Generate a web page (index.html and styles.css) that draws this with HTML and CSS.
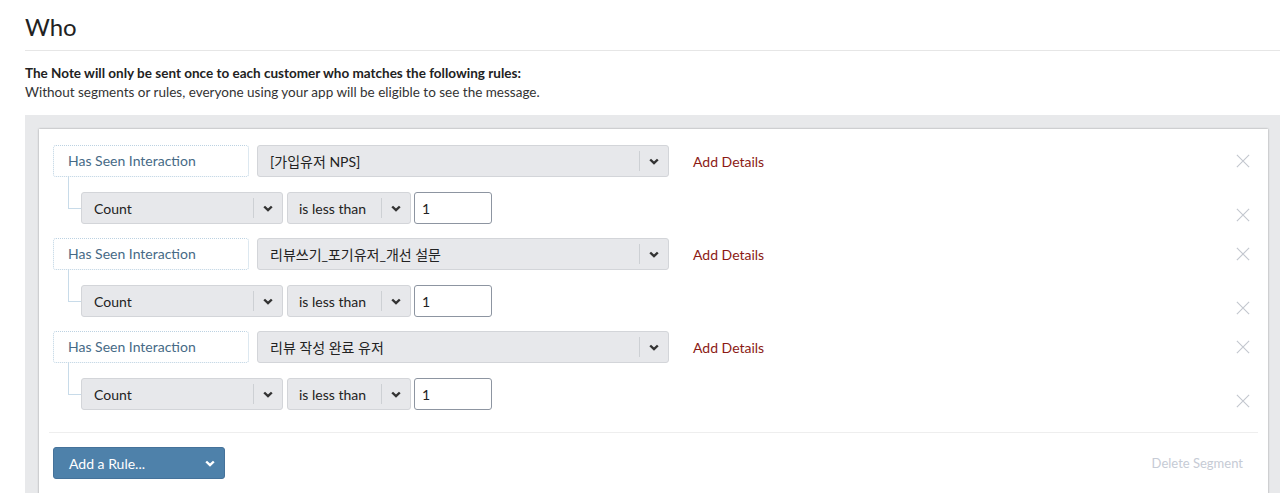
FILE: index.html
```html
<!DOCTYPE html>
<html lang="en">
<head>
  <meta charset="UTF-8" />
  <meta name="viewport" content="width=device-width, initial-scale=1.0"/>
  <title>Who</title>
  <link rel="stylesheet" href="styles.css">
</head>
<body>
  <div class="page">
    <h1 class="title">Who</h1>
    <p class="intro">
      <strong>The Note will only be sent once to each customer who matches the following rules:</strong><br>
      Without segments or rules, everyone using your app will be eligible to see the message.
    </p>

    <div class="segments">
      <div class="segment">

        <div class="rule">
          <div class="row">
            <div class="rule-type">Has Seen Interaction</div>
            <div class="select select-wide"><span>[가입유저 NPS]</span><i class="chev"><svg viewBox="0 0 10 7"><polyline points="1.2,1.5 5,5.2 8.8,1.5"/></svg></i></div>
            <a class="details" href="#">Add Details</a>
            <span class="remove"><svg viewBox="0 0 16 16"><path d="M1 1L15 15M15 1L1 15"/></svg></span>
          </div>
          <div class="row sub">
            <div class="connector"></div>
            <div class="select select-count"><span>Count</span><i class="chev"><svg viewBox="0 0 10 7"><polyline points="1.2,1.5 5,5.2 8.8,1.5"/></svg></i></div>
            <div class="select select-op"><span>is less than</span><i class="chev"><svg viewBox="0 0 10 7"><polyline points="1.2,1.5 5,5.2 8.8,1.5"/></svg></i></div>
            <input class="value" type="text" value="1">
            <span class="remove"><svg viewBox="0 0 16 16"><path d="M1 1L15 15M15 1L1 15"/></svg></span>
          </div>
        </div>

        <div class="rule">
          <div class="row">
            <div class="rule-type">Has Seen Interaction</div>
            <div class="select select-wide"><span>리뷰쓰기_포기유저_개선 설문</span><i class="chev"><svg viewBox="0 0 10 7"><polyline points="1.2,1.5 5,5.2 8.8,1.5"/></svg></i></div>
            <a class="details" href="#">Add Details</a>
            <span class="remove"><svg viewBox="0 0 16 16"><path d="M1 1L15 15M15 1L1 15"/></svg></span>
          </div>
          <div class="row sub">
            <div class="connector"></div>
            <div class="select select-count"><span>Count</span><i class="chev"><svg viewBox="0 0 10 7"><polyline points="1.2,1.5 5,5.2 8.8,1.5"/></svg></i></div>
            <div class="select select-op"><span>is less than</span><i class="chev"><svg viewBox="0 0 10 7"><polyline points="1.2,1.5 5,5.2 8.8,1.5"/></svg></i></div>
            <input class="value" type="text" value="1">
            <span class="remove"><svg viewBox="0 0 16 16"><path d="M1 1L15 15M15 1L1 15"/></svg></span>
          </div>
        </div>

        <div class="rule">
          <div class="row">
            <div class="rule-type">Has Seen Interaction</div>
            <div class="select select-wide"><span>리뷰 작성 완료 유저</span><i class="chev"><svg viewBox="0 0 10 7"><polyline points="1.2,1.5 5,5.2 8.8,1.5"/></svg></i></div>
            <a class="details" href="#">Add Details</a>
            <span class="remove"><svg viewBox="0 0 16 16"><path d="M1 1L15 15M15 1L1 15"/></svg></span>
          </div>
          <div class="row sub">
            <div class="connector"></div>
            <div class="select select-count"><span>Count</span><i class="chev"><svg viewBox="0 0 10 7"><polyline points="1.2,1.5 5,5.2 8.8,1.5"/></svg></i></div>
            <div class="select select-op"><span>is less than</span><i class="chev"><svg viewBox="0 0 10 7"><polyline points="1.2,1.5 5,5.2 8.8,1.5"/></svg></i></div>
            <input class="value" type="text" value="1">
            <span class="remove"><svg viewBox="0 0 16 16"><path d="M1 1L15 15M15 1L1 15"/></svg></span>
          </div>
        </div>

        <div class="segment-footer">
          <button class="add-rule" type="button">Add a Rule... <i class="chev"><svg viewBox="0 0 10 7"><polyline points="1.2,1.5 5,5.2 8.8,1.5"/></svg></i></button>
          <a class="delete" href="#">Delete Segment</a>
        </div>
      </div>
    </div>
  </div>
</body>
</html>
```

FILE: styles.css
```css
body {
  margin: 0;
  font-family: Lato, "Noto Sans CJK KR", sans-serif;
  font-size: 14px;
  color: #333;
  background: #fff;
  overflow: hidden;
}

.page {
  padding-left: 25px;
  width: 1257px;
}

.title {
  margin: 0;
  padding: 11px 0 7px;
  font-size: 24px;
  line-height: 32px;
  font-weight: 400;
  color: #222;
  border-bottom: 1px solid #e6e6e6;
}

.intro {
  margin: 13px 0 13px;
  font-size: 13.5px;
  line-height: 19px;
  color: #333;
}

.intro strong {
  color: #222;
}

.segments {
  background: #e8e9eb;
  padding: 14px;
  height: 400px;
}

.segment {
  background: #fff;
  box-shadow: 0 0 2px rgba(0, 0, 0, 0.35);
  padding: 16px 18px 0 14px;
  width: 1197px;
  height: 380px;
}

.rule {
  margin-bottom: 14px;
}

.row {
  display: flex;
  align-items: center;
}

.row.sub {
  margin-top: 15px;
}

.rule-type {
  width: 180px;
  height: 30px;
  line-height: 30px;
  padding-left: 14px;
  border: 1px dotted #bcd2e2;
  border-radius: 3px;
  color: #466a86;
}

.select {
  display: flex;
  align-items: center;
  border: 1px solid #d3d5d9;
  border-radius: 3px;
  background: #e7e8eb;
  color: #222;
  box-sizing: border-box;
}

.select span {
  flex: 1;
  padding-left: 12px;
}

.select .chev {
  border-left: 1px solid #cdd0d4;
  height: 20px;
  width: 28px;
}

.chev {
  display: flex;
  align-items: center;
  justify-content: center;
}

.chev svg {
  width: 10px;
  height: 7px;
  fill: none;
  stroke: #333;
  stroke-width: 2.4;
}

.select-wide {
  width: 412px;
  height: 32px;
  margin-left: 8px;
}

.select-count {
  width: 202px;
  height: 32px;
}

.select-op {
  width: 124px;
  height: 32px;
  margin-left: 4px;
}

.select-op span {
  padding-left: 11px;
}

.connector {
  flex-shrink: 0;
  width: 12px;
  height: 31px;
  margin: -15px 0 0 15px;
  align-self: flex-start;
  border-left: 1px solid #c8dbe9;
  border-bottom: 1px solid #c8dbe9;
}

.value {
  width: 78px;
  height: 32px;
  margin-left: 3px;
  box-sizing: border-box;
  border: 1px solid #8d95a1;
  border-radius: 3px;
  padding: 0 7px;
  font: inherit;
  color: #222;
}

.details {
  margin-left: 24px;
  color: #8b1a14;
  text-decoration: none;
}

.remove {
  margin-left: auto;
  width: 14px;
  height: 14px;
}

.row.sub .remove {
  align-self: flex-end;
  margin-bottom: 2px;
}

.remove svg {
  display: block;
  width: 14px;
  height: 14px;
  fill: none;
  stroke: #c3c7cf;
  stroke-width: 1.3;
}

.segment-footer {
  display: flex;
  align-items: center;
  justify-content: space-between;
  margin: 22px -8px 0 -4px;
  padding: 14px 15px 0 4px;
  border-top: 1px solid #eeeeee;
}

.add-rule {
  display: flex;
  align-items: center;
  justify-content: space-between;
  width: 172px;
  height: 32px;
  padding: 0 9px 0 15px;
  border: 1px solid #45729a;
  border-radius: 3px;
  background: #4e81aa;
  color: #fff;
  font: inherit;
}

.add-rule .chev svg {
  stroke: #fff;
}

.delete {
  font-size: 13px;
  color: #c6cbd5;
  text-decoration: none;
}
```
